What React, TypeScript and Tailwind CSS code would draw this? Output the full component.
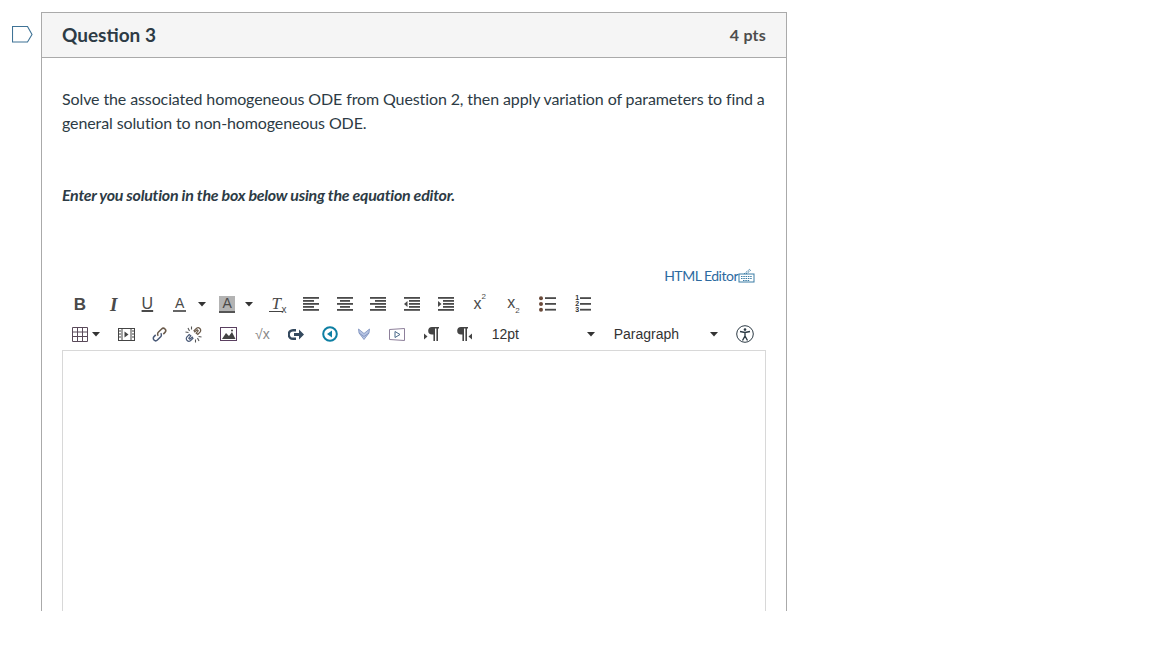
import type { ReactNode } from 'react';

const ink = '#4a4a4a';

function Cell({ w = 'w-[33.75px]', children }: { w?: string; children: ReactNode }) {
  return <div className={`${w} h-[20px] flex items-center justify-center shrink-0`}>{children}</div>;
}

function Caret() {
  return (
    <svg width="8" height="5" viewBox="0 0 8 5">
      <path d="M0 0h8L4 4.5z" fill="#333" />
    </svg>
  );
}

function Lines({ rows }: { rows: [number, number][] }) {
  return (
    <svg width="16" height="14" viewBox="0 0 16 14">
      {rows.map(([x, w], i) => (
        <rect key={i} x={x} y={i * 3} width={w} height="1.8" fill={ink} />
      ))}
    </svg>
  );
}

function Indent({ flip }: { flip?: boolean }) {
  return (
    <svg width="16" height="14" viewBox="0 0 16 14">
      <rect x="0" y="0" width="16" height="1.8" fill={ink} />
      <rect x="5" y="3" width="11" height="1.8" fill={ink} />
      <rect x="5" y="6" width="11" height="1.8" fill={ink} />
      <rect x="5" y="9" width="11" height="1.8" fill={ink} />
      <rect x="0" y="12" width="16" height="1.8" fill={ink} />
      <path d={flip ? 'M0 4l3.5 3L0 10z' : 'M3.5 4L0 7l3.5 3z'} fill={ink} />
    </svg>
  );
}

function BulletList() {
  return (
    <svg width="17" height="16" viewBox="0 0 17 16">
      <circle cx="2" cy="2.2" r="2" fill="#6b4a3a" />
      <circle cx="2" cy="8" r="2" fill="#6b4a3a" />
      <circle cx="2" cy="13.8" r="2" fill="#6b4a3a" />
      <rect x="6" y="1.2" width="11" height="1.8" fill={ink} />
      <rect x="6" y="7" width="11" height="1.8" fill={ink} />
      <rect x="6" y="12.8" width="11" height="1.8" fill={ink} />
    </svg>
  );
}

function NumberList() {
  return (
    <div className="relative w-[16px] h-[16px]">
      <div className="absolute left-0 top-[-1px] text-[7px] leading-[6px] font-bold font-['Liberation_Sans',sans-serif] text-[#333]">
        1<br />2<br />3
      </div>
      <svg className="absolute left-0 top-0" width="16" height="16" viewBox="0 0 16 16">
        <rect x="5" y="1.2" width="11" height="1.8" fill={ink} />
        <rect x="5" y="7" width="11" height="1.8" fill={ink} />
        <rect x="5" y="12.8" width="11" height="1.8" fill={ink} />
      </svg>
    </div>
  );
}

function LinkIcon({ broken }: { broken?: boolean }) {
  return (
    <svg width="17" height="17" viewBox="0 0 17 17" fill="none" strokeWidth="1.5">
      {broken ? (
        <>
          <path d="M8 12.4l-2.6 2.4a2.6 2.6 0 01-3.6-3.6l2.4-2.6 1.6 1.2-2 2.4 1 1 2.4-2z" stroke="#4a5a78" strokeWidth="1.2" />
          <path d="M9 4.6l2.6-2.4a2.6 2.6 0 013.6 3.6l-2.4 2.6-1.6-1.2 2-2.4-1-1-2.4 2z" stroke="#6a5a4a" strokeWidth="1.2" />
          <path d="M4.5 5L3 2M3.5 6.5L.5 6M6.5 3.5V.5M12.5 12l1.5 3M13.5 10.5l3 .5M10.5 13.5v3" stroke="#555" strokeWidth="1.1" />
        </>
      ) : (
        <>
          <path d="M7.3 9.7a2.4 2.4 0 010-3.4l3.3-3.3a2.4 2.4 0 013.4 3.4l-1.7 1.7" stroke="#6a5a4a" />
          <path d="M9.7 7.3a2.4 2.4 0 010 3.4l-3.3 3.3A2.4 2.4 0 013 10.6l1.7-1.7" stroke="#4a5a78" />
        </>
      )}
    </svg>
  );
}

function Pilcrow({ rtl }: { rtl?: boolean }) {
  return (
    <svg width="15" height="14" viewBox="0 0 15 14" fill="#444">
      {rtl ? (
        <>
          <path d="M4 0h7v1.6h-1V14H8.4V1.6H7V14H5.4V7.6H4a3.8 3.8 0 010-7.6z" />
          <path d="M15 6.5v6l-3.5-3z" />
        </>
      ) : (
        <>
          <path d="M8 0h7v1.6h-1V14h-1.6V1.6H11V14H9.4V7.6H8A3.8 3.8 0 018 0z" />
          <path d="M0 6.5v6l3.5-3z" />
        </>
      )}
    </svg>
  );
}

export default function App() {
  return (
    <div className="h-[648px] bg-white font-['Lato',sans-serif] text-[#2d3b45]">
      <div className="flex items-start h-[611px] overflow-hidden pt-[12px]">
        <div className="w-[41px] shrink-0 pt-[14px] pl-[12px]">
          <svg width="21" height="17" viewBox="0 0 21 17" fill="none">
            <path d="M.5.5H15.5L20 8.5 15.5 16H.5z" stroke="#3f7396" strokeWidth="1.1" />
          </svg>
        </div>
        <div className="w-[746px] shrink-0 border border-[#aaaaaa] border-b-0 h-[640px]">
          <div className="h-[45px] bg-[#f5f5f5] border-b border-[#aaaaaa] flex items-center justify-between pl-[20px] pr-[20px]">
            <h2 className="text-[19px] font-bold leading-none pb-[2px]">Question 3</h2>
            <span className="text-[16px] tracking-[0.2px] font-bold text-[#4d4d4d] leading-none">4 pts</span>
          </div>
          <div className="pl-[20px] pr-[20px] pt-[29px]">
            <p className="text-[16px] tracking-[-0.11px] leading-[24px] whitespace-nowrap">
              Solve the associated homogeneous ODE from Question 2, then apply variation of parameters to find a
              <br />
              general solution to non-homogeneous ODE.
            </p>
            <p className="mt-[48px] text-[16px] leading-[24px] font-bold italic tracking-[-0.27px] whitespace-nowrap">
              Enter you solution in the box below using the equation editor.
            </p>
            <div className="mt-[58px] flex justify-end items-center h-[20px] pr-[11px]">
              <span className="text-[14px] text-[#2d6a9f] tracking-[-0.5px]">HTML Editor</span>
              <svg width="17" height="16" viewBox="0 0 17 16" fill="none" stroke="#3a7ca5" strokeWidth="1">
                <rect x="1" y="7" width="15" height="8" />
                <path d="M6 7l6-5M8 7l5-4M3 9.5h11M3 11.5h11M5 13.5h7" strokeDasharray="1.5 .8" />
              </svg>
            </div>
            <div className="mt-[9px] pl-[1px] flex items-center text-[#4a4a4a]">
              <Cell><span className="text-[17px] font-bold font-['Liberation_Sans',sans-serif] leading-none">B</span></Cell>
              <Cell><span className="text-[19px] italic font-['Liberation_Serif',serif] font-bold leading-none">I</span></Cell>
              <Cell>
                <span className="text-[16px] underline decoration-[1.5px] underline-offset-[1px] font-['Liberation_Sans',sans-serif] leading-none">U</span>
              </Cell>
              <Cell w="w-[31px]"><span className="text-[14px] font-['Liberation_Sans',sans-serif] border-b-2 border-[#666] leading-[13px] px-[2px]">A</span></Cell>
              <Cell w="w-[14px]"><Caret /></Cell>
              <Cell w="w-[36px]"><span className="w-[16px] h-[17px] bg-[#b3b3b3] border-b-2 border-[#555] text-[14px] text-center font-['Liberation_Sans',sans-serif] leading-[15px]">A</span></Cell>
              <Cell w="w-[8px]"><Caret /></Cell>
              <div className="w-[6px] shrink-0" />
              <Cell>
                <span className="relative text-[17px] italic font-['Liberation_Serif',serif] border-b border-[#444] leading-[14px] px-[2px]">
                  T<span className="absolute left-[12px] top-[6px] not-italic text-[10px] font-['Liberation_Sans',sans-serif]">x</span>
                </span>
              </Cell>
              <div className="w-[1px] shrink-0" />
              <Cell><Lines rows={[[0, 16], [0, 11], [0, 16], [0, 11], [0, 16]]} /></Cell>
              <Cell><Lines rows={[[0, 16], [3, 10], [0, 16], [3, 10], [0, 16]]} /></Cell>
              <Cell><Lines rows={[[0, 16], [5, 11], [0, 16], [5, 11], [0, 16]]} /></Cell>
              <Cell><Indent /></Cell>
              <Cell><Indent flip /></Cell>
              <Cell>
                <span className="text-[16px] font-['Liberation_Sans',sans-serif] leading-none">x<sup className="text-[8px] align-[6px] leading-none">2</sup></span>
              </Cell>
              <Cell>
                <span className="text-[16px] font-['Liberation_Sans',sans-serif] leading-none">x<sub className="text-[8px] align-[-3px] leading-none">2</sub></span>
              </Cell>
              <Cell w="w-[35px]"><BulletList /></Cell>
              <Cell w="w-[36px]"><NumberList /></Cell>
            </div>
            <div className="mt-[10px] pl-[1px] flex items-center text-[#4a4a4a] h-[20px] font-['Liberation_Sans',sans-serif]">
              <Cell w="w-[29px] pl-[5px]">
                <svg width="16" height="15" viewBox="0 0 16 15" fill="none" stroke="#5a4a5a" strokeWidth="1">
                  <path d="M.5.5h15v14H.5zM5.5.5v14M10.5.5v14M.5 5h15M.5 9.5h15" />
                </svg>
              </Cell>
              <Cell w="w-[8px]"><Caret /></Cell>
              <Cell w="w-[43px] pl-[9px]">
                <svg width="17" height="13" viewBox="0 0 17 13" fill="none">
                  <rect x=".5" y=".5" width="16" height="12" stroke="#444" />
                  <path d="M4 .5v12M13 .5v12" stroke="#444" />
                  <path d="M1 3h2M1 6h2M1 9h2M14 3h2M14 6h2M14 9h2" stroke="#444" />
                  <path d="M6.5 3.5l4 3-4 3z" fill="#444" />
                </svg>
              </Cell>
              <Cell><LinkIcon /></Cell>
              <Cell><LinkIcon broken /></Cell>
              <Cell w="w-[35px]">
                <svg width="17" height="14" viewBox="0 0 17 14" fill="none">
                  <rect x=".5" y=".5" width="16" height="13" stroke="#5a3f60" />
                  <path d="M2 12l4-6 3 3 3-4 3.5 7z" fill="#444" />
                  <circle cx="12" cy="3.5" r="1" fill="#444" />
                </svg>
              </Cell>
              <Cell><span className="text-[14px] text-[#888] leading-none">√x</span></Cell>
              <Cell>
                <svg width="16" height="13" viewBox="0 0 16 13" fill="none">
                  <path d="M8 2.2H5a4.3 4.3 0 000 8.6h3" stroke="#34495e" strokeWidth="2.4" />
                  <path d="M6 5h5V1.5l5 5-5 5V8H6z" fill="#34495e" />
                </svg>
              </Cell>
              <Cell>
                <svg width="16" height="16" viewBox="0 0 16 16" fill="none">
                  <circle cx="8" cy="8" r="6.8" stroke="#0e7fa3" strokeWidth="2" />
                  <path d="M10 4.5v7L5 8z" fill="#0e7fa3" />
                </svg>
              </Cell>
              <Cell>
                <svg width="12" height="12" viewBox="0 0 12 12" fill="none" stroke="#7b8fbd" strokeWidth=".8">
                  <path d="M.5 1L6 5.5 11.5 1 11 5 6 11.5 1 5z" fill="#b5c3e2" />
                  <path d="M1 5l5 3.5L11 5" />
                </svg>
              </Cell>
              <Cell>
                <svg width="16" height="13" viewBox="0 0 16 13" fill="none">
                  <path d="M.5 1.5l15-1v12l-15-1z" stroke="#8d7f9a" />
                  <path d="M6 3.5L11 6.5l-5 3z" stroke="#4a6a8a" />
                </svg>
              </Cell>
              <Cell><Pilcrow /></Cell>
              <Cell><Pilcrow rtl /></Cell>
              <div className="ml-[10px] w-[95px] text-[14px] text-[#333] leading-none shrink-0">12pt</div>
              <Cell w="w-[8px]"><Caret /></Cell>
              <div className="ml-[19px] w-[96px] text-[14px] text-[#333] leading-none shrink-0">Paragraph</div>
              <Cell w="w-[8px]"><Caret /></Cell>
              <div className="ml-[18px] flex items-center">
                <svg width="18" height="18" viewBox="0 0 18 18" fill="none" stroke="#2d3b45">
                  <circle cx="9" cy="9" r="8.3" />
                  <circle cx="9" cy="4.6" r="1.3" fill="#2d3b45" stroke="none" />
                  <path d="M4 6.5l5 1 5-1M9 7.5v3.5M9 11l-2.5 4.5M9 11l2.5 4.5" strokeWidth="1.4" />
                </svg>
              </div>
            </div>
            <div className="mt-[6px] h-[400px] border border-[#d8d8d8]" />
          </div>
        </div>
      </div>
    </div>
  );
}
